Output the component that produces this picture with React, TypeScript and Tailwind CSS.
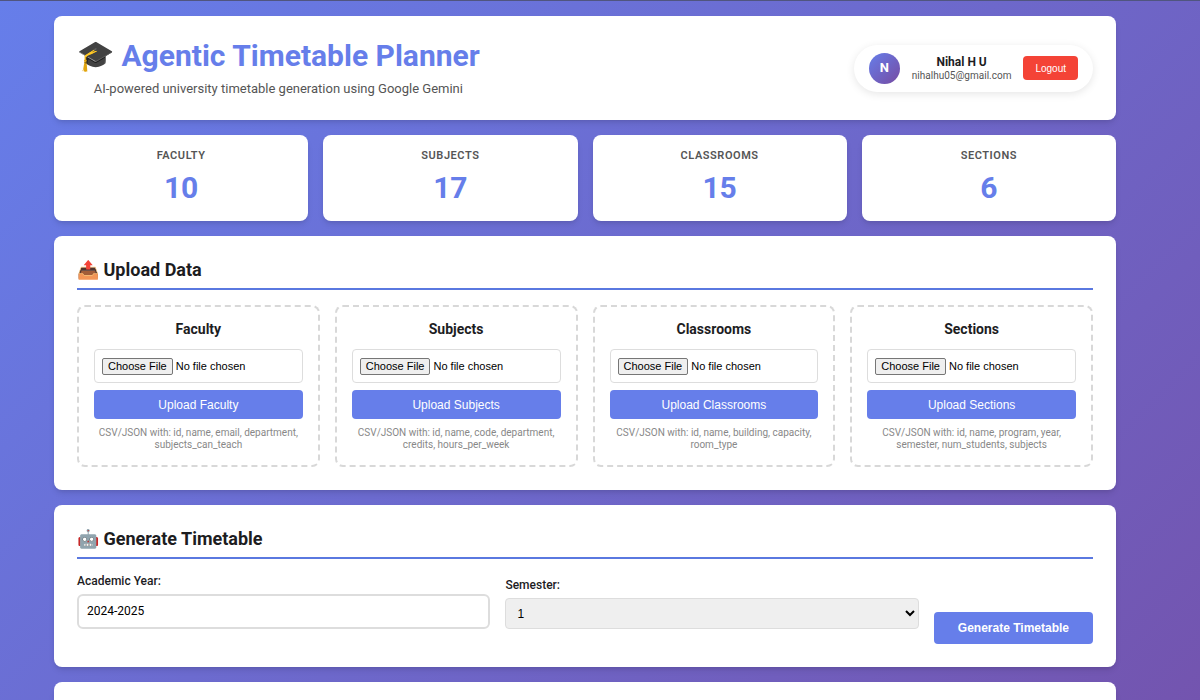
import type { ReactNode } from 'react';

const stats = [
  { label: 'Faculty', value: 10 },
  { label: 'Subjects', value: 17 },
  { label: 'Classrooms', value: 15 },
  { label: 'Sections', value: 6 },
];

const uploads = [
  { name: 'Faculty', hint: 'id, name, email, department, subjects_can_teach' },
  { name: 'Subjects', hint: 'id, name, code, department, credits, hours_per_week' },
  { name: 'Classrooms', hint: 'id, name, building, capacity, room_type' },
  { name: 'Sections', hint: 'id, name, program, year, semester, num_students, subjects' },
];

function Card({ title, children }: { title: string; children: ReactNode }) {
  return (
    <section className="rounded-lg bg-white p-[23px] shadow-md">
      <h2 className="mb-[15px] border-b-2 border-[#5a78e0] pb-2 text-[18px] leading-[21px] font-bold text-[#1d1d1f]">
        {title}
      </h2>
      {children}
    </section>
  );
}

export default function App() {
  return (
    <main className="flex min-h-screen flex-col gap-[15px] border-t border-[#50557f] bg-linear-[135deg,#667eea,#764ba2_122%] pt-[15px] pr-[84px] pl-[54px] font-[Roboto,sans-serif] text-[#1d1d1f]">
      <header className="flex items-center justify-between rounded-lg bg-white p-[23px] shadow-md">
        <div className="text-center">
          <h1 className="text-[30px] leading-[34px] font-bold text-[#667eea]">🎓 Agentic Timetable Planner</h1>
          <p className="mt-2 text-[13px] leading-4 text-[#555]">
            AI-powered university timetable generation using Google Gemini
          </p>
        </div>

        {/* Signed-in user */}
        <div className="flex items-center gap-3 rounded-full bg-white px-[15px] py-2 shadow-[0_2px_8px_rgba(0,0,0,0.1)]">
          <div className="flex size-[31px] items-center justify-center rounded-full bg-linear-[135deg,#667eea,#764ba2] text-[13px] font-bold text-white">
            N
          </div>
          <div className="text-center">
            <div className="text-[12px] leading-[14px] font-bold">Nihal H U</div>
            <div className="text-[10px] leading-[13px] text-[#555]">nihalhu05@gmail.com</div>
          </div>
          <button
            type="button"
            className="h-6 rounded-sm bg-[#f44336] px-3 font-['Liberation_Sans',sans-serif] text-[10px] text-white"
          >
            Logout
          </button>
        </div>
      </header>

      <div className="grid grid-cols-4 gap-[15px]">
        {stats.map((s) => (
          <div key={s.label} className="rounded-lg bg-white py-[15px] text-center shadow-md">
            <h3 className="text-[11px] leading-3 font-semibold tracking-wider text-[#555] uppercase">{s.label}</h3>
            <p className="mt-2 text-[30px] leading-9 font-bold text-[#667eea]">{s.value}</p>
          </div>
        ))}
      </div>

      <Card title="📤 Upload Data">
        <div className="grid grid-cols-4 gap-[15px]">
          {uploads.map((u) => (
            <form
              key={u.name}
              className="rounded-lg border-2 border-dashed border-[#d8d8d8] px-[15px] py-[14px] text-center"
            >
              <h3 className="text-[14px] leading-4 font-bold">{u.name}</h3>
              <input
                type="file"
                aria-label={`${u.name} file`}
                className="mt-3 block h-[34px] w-full rounded-sm border border-[#ddd] px-[7px] py-[7px] font-['Liberation_Sans',sans-serif] text-[11px] leading-[18px] text-black file:mr-[3px] file:h-[17px] file:rounded-xs file:border file:border-[#767676] file:bg-[#efefef] file:px-[5px] file:py-0 file:leading-[15px]"
              />
              <button
                type="button"
                className="mt-[7px] h-[29px] w-full rounded-sm bg-[#667eea] font-['Liberation_Sans',sans-serif] text-[12px] text-white"
              >
                Upload {u.name}
              </button>
              <p className="mt-2 text-[10px] leading-3 text-[#888]">{`CSV/JSON with: ${u.hint}`}</p>
            </form>
          ))}
        </div>
      </Card>

      <Card title="🤖 Generate Timetable">
        <form className="flex items-end gap-[15px]">
          <div className="mb-[15px] flex-1">
            <label htmlFor="year" className="block text-[12px] leading-[14px] font-medium">
              Academic Year:
            </label>
            <input
              id="year"
              defaultValue="2024-2025"
              className="mt-[6px] block h-[35px] w-full rounded-md border-2 border-[#ddd] px-2 pb-[2px] text-[12px] text-black"
            />
          </div>
          <div className="mb-[15px] flex-1">
            <label htmlFor="semester" className="block text-[12px] leading-[14px] font-medium">
              Semester:
            </label>
            <select
              id="semester"
              className="mt-[6px] block h-[31px] w-full rounded-sm border border-[#ddd] bg-[#efefef] px-[7px] font-['Liberation_Sans',sans-serif] text-[12px] text-black"
            >
              <option>1</option>
              <option>2</option>
            </select>
          </div>
          <button
            type="button"
            className="h-8 rounded-sm bg-[#667eea] px-6 font-['Liberation_Sans',sans-serif] text-[12px] font-bold text-white"
          >
            Generate Timetable
          </button>
        </form>
      </Card>

      <section className="min-h-[18px] flex-1 rounded-t-lg bg-white shadow-md" />
    </main>
  );
}
